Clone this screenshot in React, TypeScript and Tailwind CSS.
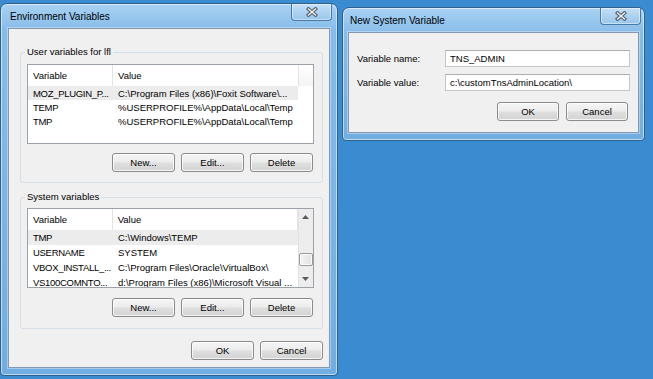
import React from "react";

type BtnProps = { label: string; w?: string };

function Btn({ label, w = "w-[63px]" }: BtnProps) {
  return (
    <div
      className={`${w} flex h-[19px] items-center justify-center rounded-[3px] border border-[#8b8b8b] bg-[linear-gradient(#f6f6f6,#ececec_45%,#dedede_55%,#d3d3d3)] text-black shadow-[inset_0_0_0_1px_rgba(255,255,255,0.75)]`}
    >
      {label}
    </div>
  );
}

function CloseBtn({ pos }: { pos: string }) {
  return (
    <div
      className={`absolute top-0 ${pos} flex h-[17px] w-[41px] items-center justify-center rounded-b-[4px] border border-t-0 border-[#4b79a7] bg-[linear-gradient(#c4dff5,#98c6ec)] shadow-[inset_0_0_0_1px_rgba(255,255,255,0.45)]`}
    >
      <svg width="12" height="10" viewBox="0 0 12 10">
        <path d="M2.5 2 L9.5 8 M9.5 2 L2.5 8" stroke="#4f5965" strokeWidth="3.6" strokeLinecap="square" fill="none" />
        <path d="M2.5 2 L9.5 8 M9.5 2 L2.5 8" stroke="#f2f4f6" strokeWidth="1.5" strokeLinecap="square" fill="none" />
      </svg>
    </div>
  );
}

function Scrollbar() {
  return (
    <div className="flex w-[15px] shrink-0 flex-col bg-[#ededed] shadow-[inset_1px_0_0_#e2e2e2]">
      <div className="flex h-[16px] items-center justify-center">
        <svg width="7" height="4" viewBox="0 0 7 4">
          <path d="M0 4 L3.5 0 L7 4 Z" fill="#5a5a5a" />
        </svg>
      </div>
      <div className="flex-1">
        <div className="mx-auto mt-[28px] h-[13px] w-[14px] rounded-[2px] border border-[#9a9a9a] bg-[linear-gradient(90deg,#f4f4f4,#e2e2e2)] shadow-[inset_0_0_0_1px_rgba(255,255,255,0.8)]" />
      </div>
      <div className="flex h-[16px] items-center justify-center">
        <svg width="7" height="4" viewBox="0 0 7 4">
          <path d="M0 0 L7 0 L3.5 4 Z" fill="#5a5a5a" />
        </svg>
      </div>
    </div>
  );
}

type ListProps = {
  rows: [string, string][];
  rowH: string;
  highlight: number;
  scroll?: boolean;
};

function ListView({ rows, rowH, highlight, scroll }: ListProps) {
  return (
    <div className="flex h-[80px] w-[287px] overflow-hidden border border-[#9ca2aa] bg-white">
      <div className="flex min-w-0 flex-1 flex-col">
        <div className="flex h-[21px] shrink-0 items-stretch">
          <div className="flex w-[85px] items-center border-r border-[#e3e3e3] pl-[5px]">Variable</div>
          <div className="flex w-[186px] items-center border-r border-[#e3e3e3] pl-[5px]">Value</div>
          <div className="flex-1 bg-[linear-gradient(#ffffff,#f4f4f4)]" />
        </div>
        {rows.map(([a, b], i) => (
          <div
            key={a}
            className={`flex ${rowH} w-[270px] shrink-0 items-center whitespace-nowrap ${i === highlight ? "bg-[#ececec]" : ""}`}
          >
            <div className="w-[85px] shrink-0 pl-[5px] tracking-[-0.3px]">{a}</div>
            <div className="w-[185px] shrink-0 overflow-hidden pl-[5px]">{b}</div>
          </div>
        ))}
      </div>
      {scroll && <Scrollbar />}
    </div>
  );
}

type GroupProps = {
  label: string;
  h: string;
  pt: string;
  mt: string;
  pb: string;
  children: React.ReactNode;
};

function GroupBox({ label, h, pt, mt, pb, children }: GroupProps) {
  return (
    <div className={`relative flex ${h} w-[303px] shrink-0 flex-col rounded-[3px] border border-[#d5dfe5] pl-[6px] pr-[8px] ${pt} ${pb}`}>
      <div className="absolute -top-[7px] left-[4px] bg-[#f0f0f0] px-[2px]">{label}</div>
      {children}
      <div className={`flex justify-end gap-[6px] pr-[1px] ${mt}`}>
        <Btn label="New..." />
        <Btn label="Edit..." />
        <Btn label="Delete" />
      </div>
    </div>
  );
}

export default function App() {
  const userRows: [string, string][] = [
    ["MOZ_PLUGIN_P...", "C:\\Program Files (x86)\\Foxit Software\\..."],
    ["TEMP", "%USERPROFILE%\\AppData\\Local\\Temp"],
    ["TMP", "%USERPROFILE%\\AppData\\Local\\Temp"],
  ];
  const sysRows: [string, string][] = [
    ["TMP", "C:\\Windows\\TEMP"],
    ["USERNAME", "SYSTEM"],
    ["VBOX_INSTALL_...", "C:\\Program Files\\Oracle\\VirtualBox\\"],
    ["VS100COMNTO...", "d:\\Program Files (x86)\\Microsoft Visual ..."],
  ];

  return (
    <div className="relative h-[379px] w-[653px] overflow-hidden bg-[#3b8bd1] font-['Liberation_Sans',Arial,sans-serif] text-[9.5px] leading-[11px] text-black">
      {/* Environment Variables window */}
      <div className="absolute left-0 top-[3px] flex h-[373px] w-[338px] flex-col rounded-t-[7px] rounded-b-[4px] border border-[#2f618f] bg-[linear-gradient(#a9d1f3,#86bce9_26px,#72ade2)] px-[7px] pb-[7px] shadow-[inset_0_0_0_1px_rgba(255,255,255,0.55)]">
        <div className="flex h-[24px] shrink-0 items-center pl-[2px] text-[10px]">Environment Variables</div>
        <div className="flex flex-1 flex-col border border-[#8598ad] bg-[#f0f0f0] pl-[11px] pt-[23px] shadow-[0_0_0_1px_rgba(255,255,255,0.35)]">
          <GroupBox label="User variables for lfl" h="h-[131px]" pt="pt-[11px]" mt="mt-[9px]" pb="pb-[10px]">
            <ListView rows={userRows} rowH="h-[14px]" highlight={0} />
          </GroupBox>
          <div className="h-[14px] shrink-0" />
          <GroupBox label="System variables" h="h-[132px]" pt="pt-[10px]" mt="mt-[10px]" pb="pb-[11px]">
            <ListView rows={sysRows} rowH="h-[15px]" highlight={0} scroll />
          </GroupBox>
          <div className="mt-[12px] flex w-[303px] justify-end gap-[6px]">
            <Btn label="OK" />
            <Btn label="Cancel" />
          </div>
        </div>
        <CloseBtn pos="right-[5px]" />
      </div>

      {/* New System Variable window */}
      <div className="absolute left-[342px] top-[7px] flex h-[134px] w-[303px] flex-col rounded-t-[7px] rounded-b-[4px] border border-[#2f618f] bg-[linear-gradient(#a9d1f3,#86bce9_26px,#72ade2)] px-[5px] pb-[7px] shadow-[inset_0_0_0_1px_rgba(255,255,255,0.55)]">
        <div className="flex h-[24px] shrink-0 items-center pl-[2px] text-[10px]">New System Variable</div>
        <div className="flex flex-1 flex-col border border-[#8598ad] bg-[#f0f0f0] px-[8px] pt-[17px] shadow-[0_0_0_1px_rgba(255,255,255,0.35)]">
          <div className="flex items-center">
            <div className="w-[88px] shrink-0">Variable name:</div>
            <div className="flex h-[17px] flex-1 items-center border border-[#c3c7cd] border-t-[#abadb3] bg-white pl-[4px]">TNS_ADMIN</div>
          </div>
          <div className="mt-[7px] flex items-center">
            <div className="w-[88px] shrink-0">Variable value:</div>
            <div className="flex h-[17px] flex-1 items-center border border-[#c3c7cd] border-t-[#abadb3] bg-white pl-[4px]">c:\customTnsAdminLocation\</div>
          </div>
          <div className="mt-[11px] flex justify-end gap-[7px] pr-[2px]">
            <Btn label="OK" w="w-[62px]" />
            <Btn label="Cancel" w="w-[62px]" />
          </div>
        </div>
        <CloseBtn pos="right-[3px]" />
      </div>
    </div>
  );
}
